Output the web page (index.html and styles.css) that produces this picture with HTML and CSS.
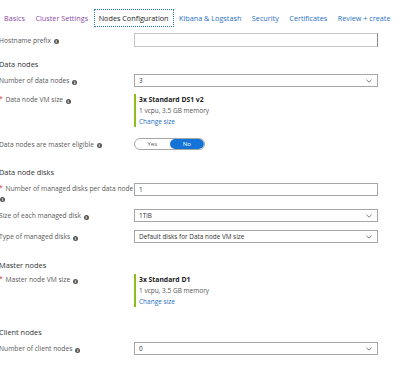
FILE: index.html
```html
<!DOCTYPE html>
<html>
<head>
<meta charset="utf-8">
<link rel="stylesheet" href="styles.css">
</head>
<body>
<nav class="tabs">
  <span class="tab visited">Basics</span>
  <span class="tab visited">Cluster Settings</span>
  <span class="tab active">Nodes Configuration</span>
  <span class="tab">Kibana &amp; Logstash</span>
  <span class="tab">Security</span>
  <span class="tab">Certificates</span>
  <span class="tab">Review + create</span>
</nav>

<main class="form">
  <div class="row r-host">
    <div class="label">Hostname prefix <i class="info">i</i></div>
    <div class="input"></div>
  </div>

  <h3 class="heading h-data">Data nodes</h3>
  <div class="row r-datacount">
    <div class="label">Number of data nodes <i class="info">i</i></div>
    <div class="select"><span>3</span><svg class="chev" viewBox="0 0 8 5"><path d="M0.5 0.8 L4 4 L7.5 0.8" /></svg></div>
  </div>
  <div class="row r-vm top">
    <div class="label"><b class="req">*</b> Data node VM size <i class="info">i</i></div>
    <div class="vm">
      <div class="vm-title">3x Standard DS1 v2</div>
      <div class="vm-desc">1 vcpu, 3.5 GB memory</div>
      <div class="vm-link">Change size</div>
    </div>
  </div>
  <div class="row r-toggle">
    <div class="label">Data nodes are master eligible <i class="info">i</i></div>
    <div class="toggle"><span class="opt">Yes</span><span class="opt on">No</span></div>
  </div>

  <h3 class="heading h-disks">Data node disks</h3>
  <div class="row r-disks top">
    <div class="label two"><b class="req">*</b> Number of managed disks per data node<br><i class="info">i</i></div>
    <div class="input"><span>1</span></div>
  </div>
  <div class="row r-size">
    <div class="label">Size of each managed disk <i class="info">i</i></div>
    <div class="select"><span>1TiB</span><svg class="chev" viewBox="0 0 8 5"><path d="M0.5 0.8 L4 4 L7.5 0.8" /></svg></div>
  </div>
  <div class="row r-type">
    <div class="label">Type of managed disks <i class="info">i</i></div>
    <div class="select"><span>Default disks for Data node VM size</span><svg class="chev" viewBox="0 0 8 5"><path d="M0.5 0.8 L4 4 L7.5 0.8" /></svg></div>
  </div>

  <h3 class="heading h-master">Master nodes</h3>
  <div class="row r-mvm top">
    <div class="label"><b class="req">*</b> Master node VM size <i class="info">i</i></div>
    <div class="vm">
      <div class="vm-title">3x Standard D1</div>
      <div class="vm-desc">1 vcpu, 3.5 GB memory</div>
      <div class="vm-link">Change size</div>
    </div>
  </div>

  <h3 class="heading h-client">Client nodes</h3>
  <div class="row r-client">
    <div class="label">Number of client nodes <i class="info">i</i></div>
    <div class="select"><span>0</span><svg class="chev" viewBox="0 0 8 5"><path d="M0.5 0.8 L4 4 L7.5 0.8" /></svg></div>
  </div>
</main>
</body>
</html>
```

FILE: styles.css
```css
* { box-sizing: border-box; }
html, body { margin: 0; padding: 0; background: #fff; }
body {
  font-family: "Open Sans", "Noto Sans", "Liberation Sans", sans-serif;
  font-size: 6.7px;
  color: #555;
  width: 403px;
  height: 367px;
  overflow: hidden;
}

.tabs {
  display: flex;
  align-items: center;
  height: 18px;
  margin-top: 9px;
  padding-left: 4px;
  gap: 10.5px;
  font-size: 7.25px;
  white-space: nowrap;
}
.tab { color: #1f6fc4; line-height: 16px; }
.tab.visited { color: #8a4aa6; }
.tab.active {
  color: #222;
  border: 1px dotted #2c7fb8;
  padding: 0 4px;
  height: 18px;
  line-height: 16px;
  margin: 0 -5px 0 -5px;
}

.form { margin-left: -1px; }

.row {
  display: grid;
  grid-template-columns: 135px 244px;
  align-items: center;
}
.row.top { align-items: start; }

.label { color: #5a5a5a; white-space: nowrap; line-height: 9px; }
.label.two { line-height: 9px; padding-top: 1px; }
.req { color: #d13438; font-weight: normal; margin-right: 1px; }

.info {
  display: inline-block;
  width: 5px;
  height: 5px;
  border-radius: 50%;
  background: #555;
  color: #fff;
  font-style: normal;
  font-weight: bold;
  font-size: 4px;
  line-height: 5px;
  text-align: center;
  vertical-align: -0.5px;
  margin-left: 1px;
  font-family: "DejaVu Sans", sans-serif;
}
.label.two .info { margin-left: 1px; }

.input, .select {
  height: 13px;
  border: 1px solid #a6a6a6;
  background: #fff;
  display: flex;
  align-items: center;
  padding-left: 4px;
  color: #333;
  font-size: 6.4px;
}
.r-host .input { height: 14px; border-color: #c8c8c8; border-right-color: #888; }
.select { justify-content: space-between; padding-right: 5px; }
.chev { width: 6px; height: 4px; }
.chev path { fill: none; stroke: #555; stroke-width: 1; }

.heading {
  margin: 0;
  font-weight: normal;
  font-size: 7.4px;
  color: #333;
  line-height: 10px;
}

.vm {
  border-left: 2px solid #8cbd18;
  padding-left: 3px;
  line-height: 11px;
  font-size: 6.5px;
}
.vm-title { font-weight: bold; color: #222; font-size: 6.8px; }
.vm-desc { color: #555; }
.vm-link { color: #1f6fc4; }

.toggle {
  display: flex;
  width: 71px;
  height: 12px;
  border: 1px solid #a6a6a6;
  border-radius: 6px;
  overflow: hidden;
  font-size: 6px;
}
.opt { flex: 1; text-align: center; line-height: 10px; color: #555; }
.opt.on { background: #1473d6; color: #fff; border-radius: 6px; }

.r-host { margin-top: 6px; }
.h-data { margin-top: 12px; }
.r-datacount { margin-top: 5px; }
.r-vm { margin-top: 7px; height: 36px; }
.r-vm .label { padding-top: 1px; }
.r-toggle { margin-top: 8px; }
.h-disks { margin-top: 17px; }
.r-disks { margin-top: 6px; height: 19px; }
.r-size { margin-top: 7px; }
.r-type { margin-top: 8px; }
.h-master { margin-top: 17px; }
.r-mvm { margin-top: 4px; height: 35px; }
.r-mvm .label { padding-top: 1px; }
.h-client { margin-top: 18px; }
.r-client { margin-top: 5px; }
```
